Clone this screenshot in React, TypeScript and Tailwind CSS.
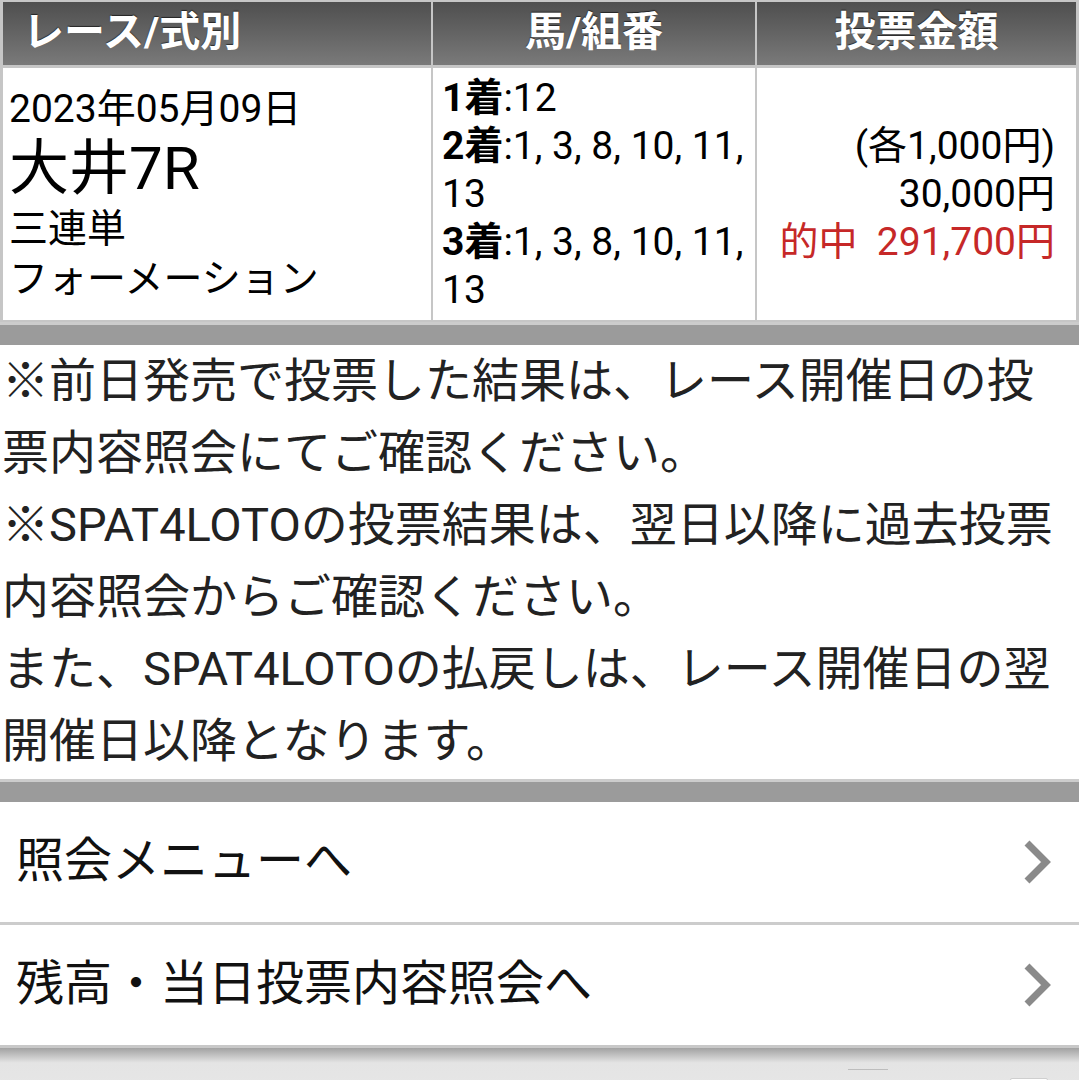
import { ReactNode } from "react";

const font = "font-['Roboto','Noto_Sans_CJK_JP',sans-serif]";

function HeadCell({ children, align = "center" }: { children: ReactNode; align?: "left" | "center" }) {
  return (
    <div
      className={`h-[63px] flex items-center pb-[2px] bg-gradient-to-b from-[#4f4f4f] to-[#7a7a7a] text-white font-bold text-[41px] leading-none [text-shadow:0_-1px_1px_rgba(0,0,0,0.6)] ${
        align === "left" ? "justify-start pl-[20px]" : "justify-center"
      }`}
    >
      {children}
    </div>
  );
}

function Chevron() {
  return (
    <svg width="30" height="44" viewBox="0 0 30 44" className="shrink-0">
      <polyline points="4,3 23,22 4,41" fill="none" stroke="#8a8a8a" strokeWidth="7" strokeLinejoin="miter" />
    </svg>
  );
}

function MenuItem({ label }: { label: string }) {
  return (
    <div className="h-[120px] flex items-center justify-between pl-[16px] pr-[26px] bg-white">
      <span className="text-[48px] text-[#111] pb-[2px]">{label}</span>
      <Chevron />
    </div>
  );
}

function GreyBar() {
  return <div className="h-[23px] border-t-[3px] border-[#cccccc] bg-[#9b9b9b]" />;
}

export default function App() {
  return (
    <div className={`${font} w-[1079px] h-[1080px] overflow-hidden bg-white text-black`}>
      {/* results table */}
      <div className="grid grid-cols-[428px_322px_1fr] gap-x-[2px] gap-y-[3px] bg-[#c6c6c6] px-[3px] pt-[2px] pb-[2px]">
        <HeadCell align="left">レース/式別</HeadCell>
        <HeadCell>馬/組番</HeadCell>
        <HeadCell>投票金額</HeadCell>

        <div className="h-[252px] bg-white pl-[6px] pt-[16px]">
          <div className="text-[39px] leading-[50px]">2023年05月09日</div>
          <div className="text-[60px] leading-[70px]">大井7R</div>
          <div className="text-[39px] leading-[50px]">三連単</div>
          <div className="text-[39px] leading-[50px]">フォーメーション</div>
        </div>

        <div className="h-[252px] bg-white pl-[9px] pr-[2px] flex flex-col justify-center text-[39px] leading-[48px]">
          <div>
            <b>1着</b>:12
          </div>
          <div>
            <b>2着</b>:1, 3, 8, 10, 11, 13
          </div>
          <div>
            <b>3着</b>:1, 3, 8, 10, 11, 13
          </div>
        </div>

        <div className="h-[252px] bg-white pr-[21px] flex flex-col justify-center items-end text-[39px] leading-[48px]">
          <div>(各1,000円)</div>
          <div>30,000円</div>
          <div className="text-[#c62828] whitespace-pre">的中  291,700円</div>
        </div>
      </div>

      <GreyBar />

      {/* notes */}
      <div className="pl-[2px] pb-[2px] text-[47px] leading-[72px] text-[#222]">
        <p>※前日発売で投票した結果は、レース開催日の投票内容照会にてご確認ください。</p>
        <p>※SPAT4LOTOの投票結果は、翌日以降に過去投票内容照会からご確認ください。</p>
        <p>また、SPAT4LOTOの払戻しは、レース開催日の翌開催日以降となります。</p>
      </div>

      <GreyBar />

      {/* menu */}
      <MenuItem label="照会メニューへ" />
      <div className="h-[3px] bg-[#cccccc]" />
      <MenuItem label="残高・当日投票内容照会へ" />

      <div className="relative h-[40px] border-t-[3px] border-[#c8c8c8] bg-gradient-to-b from-[#a2a2a2] via-[#e4e4e4] via-40% to-[#e6e6e6]">
        <div className="absolute left-[848px] top-[21px] w-[40px] h-px bg-[#bdbdbd]" />
        <div className="absolute left-[1010px] top-[30px] w-[38px] h-[12px] bg-white border border-[#cfcfcf] rounded-[2px]" />
      </div>
    </div>
  );
}
